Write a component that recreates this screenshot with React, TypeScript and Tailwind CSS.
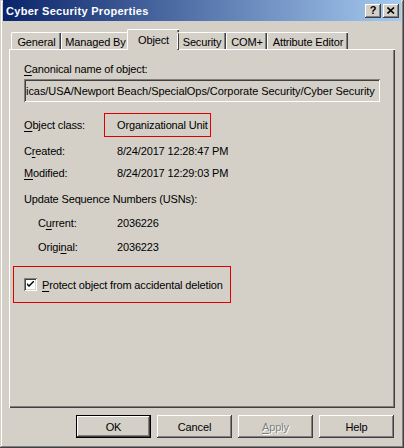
import React from "react";

const raised =
  "shadow-[inset_-1px_-1px_#404040,inset_1px_1px_#ffffff,inset_-2px_-2px_#808080,inset_2px_2px_#d4d0c8]";

function Key({ children }: { children: React.ReactNode }) {
  return <span className="underline underline-offset-[2px] decoration-1">{children}</span>;
}

const tabs = [
  { name: "General", w: "w-[50px]" },
  { name: "Managed By", w: "w-[68px]" },
  { name: "Object", w: "w-[52px]", active: true },
  { name: "Security", w: "w-[49px]" },
  { name: "COM+", w: "w-[41px]" },
  { name: "Attribute Editor", w: "w-[81px]" },
];

function Button({ children, primary, disabled }: { children: React.ReactNode; primary?: boolean; disabled?: boolean }) {
  return (
    <button
      className={
        "w-[75px] h-[23px] bg-[#d4d0c8] flex items-center justify-center " +
        (primary
          ? "border border-black shadow-[inset_-1px_-1px_#404040,inset_1px_1px_#ffffff,inset_-2px_-2px_#808080]"
          : raised) +
        (disabled ? " text-[#808080] [text-shadow:1px_1px_0_#ffffff]" : " text-black")
      }
    >
      {children}
    </button>
  );
}

export default function App() {
  return (
    <div
      className="w-[404px] h-[448px] bg-[#d4d0c8] flex flex-col px-[3px] text-[11px] leading-[14px] tracking-[-0.15px] text-black shadow-[inset_-1px_-1px_#404040,inset_1px_1px_#d4d0c8,inset_-2px_-2px_#808080,inset_2px_2px_#ffffff]"
      style={{ fontFamily: '"Liberation Sans", Arial, sans-serif' }}
    >
      {/* title bar */}
      <div className="h-[21px] flex items-center pl-[3px] pr-[2px] bg-[linear-gradient(to_right,#0a246a,#a6caf0)]">
        <span className="text-white font-bold flex-1 tracking-[0.3px]">Cyber Security Properties</span>
        <div className="flex gap-[2px]">
          <div className={"w-[16px] h-[14px] bg-[#d4d0c8] flex items-center justify-center font-bold text-[11px] leading-none " + raised}>
            ?
          </div>
          <div className={"w-[16px] h-[14px] bg-[#d4d0c8] flex items-center justify-center " + raised}>
            <svg width="8" height="7" viewBox="0 0 8 7">
              <path d="M0.5 0.5 L7 6.5 M7 0.5 L0.5 6.5" stroke="#000" strokeWidth="1.6" fill="none" />
            </svg>
          </div>
        </div>
      </div>

      <div className="px-[6px] flex flex-col">
        {/* tabs */}
        <div className="relative z-10 flex items-start pl-[2px] mt-[8px] h-[21px]">
          {tabs.map((t) =>
            t.active ? (
              <div
                key={t.name}
                className={
                  t.w +
                  " -mx-[2px] h-[21px] bg-[#d4d0c8] border-l border-t border-white rounded-tl-[2px] shadow-[inset_-1px_0_#404040,inset_-2px_0_#808080] flex justify-center pt-[3px] whitespace-nowrap"
                }
              >
                {t.name}
              </div>
            ) : (
              <div
                key={t.name}
                className={
                  t.w +
                  " mt-[3px] h-[17px] border-l border-t border-white rounded-tl-[2px] shadow-[inset_-1px_0_#404040,inset_-2px_0_#808080] flex justify-center pt-[2px] whitespace-nowrap"
                }
              >
                {t.name}
              </div>
            )
          )}
        </div>

        {/* panel */}
        <div className="-mt-[1px] h-[359px] flex flex-col pl-[15px] pr-[15px] shadow-[inset_1px_1px_#ffffff,inset_-1px_-1px_#404040,inset_-2px_-2px_#808080]">
          <div className="mt-[13px] h-[14px]">
            <Key>C</Key>anonical name of object:
          </div>
          <div className="mt-[3px] h-[23px] flex items-center overflow-hidden whitespace-nowrap pl-[2px] shadow-[inset_1px_1px_#808080,inset_-1px_-1px_#ffffff,inset_2px_2px_#404040,inset_-2px_-2px_#d4d0c8]">
            <span className="tracking-[-0.06px]">icas/USA/Newport Beach/SpecialOps/Corporate Security/Cyber Security</span>
          </div>

          <div className="mt-[11px] h-[24px] flex items-center">
            <div className="w-[80px]">
              <Key>O</Key>bject class:
            </div>
            <div className="w-[107px] h-[24px] border border-[#e00000] flex items-center pl-[12px] whitespace-nowrap">
              Organizational Unit
            </div>
          </div>

          <div className="mt-[7px] h-[14px] flex">
            <div className="w-[93px]">
              C<Key>r</Key>eated:
            </div>
            <div>8/24/2017 12:28:47 PM</div>
          </div>

          <div className="mt-[8px] h-[14px] flex">
            <div className="w-[93px]">
              <Key>M</Key>odified:
            </div>
            <div>8/24/2017 12:29:03 PM</div>
          </div>

          <div className="mt-[12px] h-[14px]">Update Sequence Numbers (USNs):</div>

          <div className="mt-[10px] h-[14px] flex pl-[14px]">
            <div className="w-[79px]">
              C<Key>u</Key>rrent:
            </div>
            <div>2036226</div>
          </div>

          <div className="mt-[10px] h-[14px] flex pl-[14px]">
            <div className="w-[79px]">
              Origi<Key>n</Key>al:
            </div>
            <div>2036223</div>
          </div>

          <div className="mt-[12px] -ml-[11px] w-[218px] h-[37px] border border-[#e00000] flex items-center pl-[10px] gap-[5px]">
            <div className="w-[13px] h-[13px] bg-white flex items-center justify-center shadow-[inset_1px_1px_#808080,inset_-1px_-1px_#ffffff,inset_2px_2px_#404040,inset_-2px_-2px_#d4d0c8]">
              <svg width="7" height="7" viewBox="0 0 7 7">
                <path d="M0 2 L0 4 L2 6 L7 1 L7 -1 L2 4 Z" fill="#000" />
              </svg>
            </div>
            <span className="whitespace-nowrap">
              <Key>P</Key>rotect object from accidental deletion
            </span>
          </div>
        </div>

        {/* buttons */}
        <div className="mt-[7px] flex justify-end gap-[6px] pr-[1px]">
          <Button primary>OK</Button>
          <Button>Cancel</Button>
          <Button disabled>
            <Key>A</Key>pply
          </Button>
          <Button>Help</Button>
        </div>
      </div>
    </div>
  );
}
